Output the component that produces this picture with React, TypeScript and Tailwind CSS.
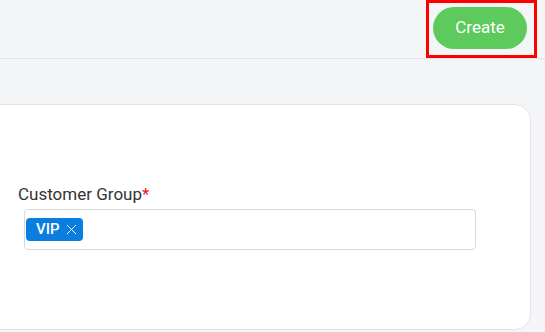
export default function App() {
	return (
		<div
			className="relative h-[332px] w-[545px] overflow-hidden bg-[#f4f5f7]"
			style={{ fontFamily: 'Roboto, "Liberation Sans", sans-serif' }}
		>
			{/* Header */}
			<div className="flex h-[59px] items-start justify-end border-b border-[#e2e3e6] pr-[18px] pt-[7px]">
				<button className="h-[42px] w-[94px] rounded-full bg-[#5cca5c] text-[17px] text-white">
					Create
				</button>
			</div>

			{/* Highlight box */}
			<div className="absolute left-[426px] top-0 h-[58px] w-[111px] border-[3px] border-[#ff0000]" />

			{/* Card */}
			<div className="ml-[-20px] mt-[45px] h-[226px] w-[551px] rounded-2xl border border-[#e3e4e7] bg-white pl-[37px] pt-[79px]">
				<div className="text-[17px] leading-[21px] text-[#333]">
					Customer Group<span className="text-[#e02020]">*</span>
				</div>
				<div className="ml-[6px] mt-[4px] flex h-[41px] w-[452px] items-center rounded border border-[#d9d9d9] px-[1px]">
					<span className="flex h-[23px] items-center gap-[6px] rounded-[4px] bg-[#0a7de0] pl-[10px] pr-[6px] text-[15px] font-medium text-white">
						VIP
						<svg width="11" height="11" viewBox="0 0 11 11" fill="none" stroke="white" strokeWidth="1">
							<path d="M1 1l9 9M10 1l-9 9" />
						</svg>
					</span>
				</div>
			</div>
		</div>
	);
}
